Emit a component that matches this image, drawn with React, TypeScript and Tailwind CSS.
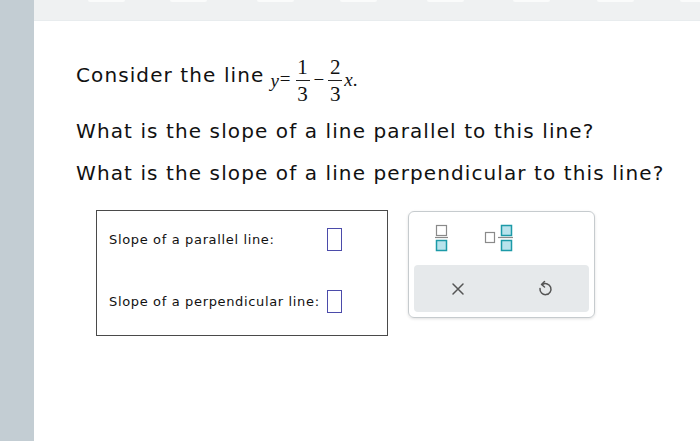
import React from 'react';

function Frac({ n, d }: { n: string; d: string }) {
  return (
    <span className="inline-flex flex-col items-center mt-[10px] leading-none">
      <span className="text-[21px] leading-[20px]">{n}</span>
      <span className="block w-[14px] h-px bg-[#222] mt-[3px]"></span>
      <span className="text-[21px] leading-[20px] pt-[3px]">{d}</span>
    </span>
  );
}

function FracIcon() {
  return (
    <svg width="13" height="28" viewBox="0 0 13 28">
      <rect x="1.5" y="1.5" width="10" height="10" fill="none" stroke="#8a8a8a" strokeWidth="1.2" />
      <line x1="0" y1="13.5" x2="13" y2="13.5" stroke="#8a8a8a" strokeWidth="1.2" />
      <rect x="1.5" y="16.5" width="10" height="10" fill="#b9e3ec" stroke="#1c9aa8" strokeWidth="1.5" />
    </svg>
  );
}

function MixedIcon() {
  return (
    <svg width="30" height="28" viewBox="0 0 30 28">
      <rect x="1.5" y="8.5" width="9" height="10" fill="none" stroke="#8a8a8a" strokeWidth="1.2" />
      <rect x="17.5" y="1.5" width="10" height="10" fill="#b9e3ec" stroke="#1c9aa8" strokeWidth="1.5" />
      <line x1="14" y1="13.5" x2="29" y2="13.5" stroke="#8a8a8a" strokeWidth="1.2" />
      <rect x="17.5" y="16.5" width="10" height="10" fill="#b9e3ec" stroke="#1c9aa8" strokeWidth="1.5" />
    </svg>
  );
}

export default function App() {
  const tabs = [88, 170, 257, 340, 427, 513, 597, 680];
  return (
    <div className="w-[700px] h-[441px] flex bg-white overflow-hidden" style={{ fontFamily: 'Verdana, "DejaVu Sans", sans-serif' }}>
      <div className="w-[34px] h-full bg-[#c3cdd3] shrink-0"></div>
      <div className="flex-1 flex flex-col">
        <div className="h-[21px] bg-[#eff1f2] relative border-b border-[#e8ecee]">
          {tabs.map((x) => (
            <div key={x} className="absolute top-0 w-[37px] h-[2px] bg-[#fafbfb] rounded-b-full" style={{ left: x - 34 }}></div>
          ))}
        </div>
        <div className="pl-[42px] pt-[32px] text-[#111] text-[20px] tracking-[1.1px]">
          <div className="flex items-center h-[44px]">
            <span>Consider the line</span>
            <span className="ml-[6px] flex items-center tracking-normal text-[19px]" style={{ fontFamily: '"Liberation Serif", "Times New Roman", serif' }}>
              <span className="italic mt-[12px]">y</span>
              <span className="mt-[8px] ml-[1px]">=</span>
              <span className="ml-[5px]"><Frac n="1" d="3" /></span>
              <span className="mt-[10px] mx-[4px]">−</span>
              <Frac n="2" d="3" />
              <span className="italic mt-[10px] ml-[2px]">x</span>
              <span className="mt-[10px]">.</span>
            </span>
          </div>
          <div className="mt-[20px] h-[28px] leading-[28px]">What is the slope of a line parallel to this line?</div>
          <div className="mt-[14px] h-[28px] leading-[28px]">What is the slope of a line perpendicular to this line?</div>
          <div className="flex mt-[23px] ml-[20px] items-start tracking-normal">
            <div className="w-[292px] h-[126px] border border-[#4a4a4a] pl-[12px] pt-[17px] text-[13px] tracking-[0.65px] text-[#111]">
              <div className="flex items-center h-[23px]">
                <span className="w-[218px]">Slope of a parallel line:</span>
                <span className="w-[15px] h-[23px] border-[1.5px] border-[#4b4baa]"></span>
              </div>
              <div className="flex items-center h-[23px] mt-[39px]">
                <span className="w-[218px]">Slope of a perpendicular line:</span>
                <span className="w-[15px] h-[23px] border-[1.5px] border-[#4b4baa]"></span>
              </div>
            </div>
            <div className="ml-[20px] mt-[1px] w-[187px] h-[107px] border border-[#c6cbce] rounded-[6px] shadow-[0_1px_3px_rgba(0,0,0,0.12)] p-[5px] flex flex-col">
              <div className="flex items-start h-[48px] pl-[21px] pt-[7px]">
                <FracIcon />
                <span className="ml-[36px]"><MixedIcon /></span>
              </div>
              <div className="flex-1 bg-[#e6e9eb] rounded-[4px] flex items-center">
                <div className="w-1/2 flex justify-center">
                  <svg width="14" height="14" viewBox="0 0 14 14">
                    <path d="M2 2 L12 12 M12 2 L2 12" stroke="#555" strokeWidth="1.5" strokeLinecap="round" />
                  </svg>
                </div>
                <div className="w-1/2 flex justify-center">
                  <svg width="16" height="18" viewBox="0 0 16 18">
                    <path d="M5.5 4.5 A5.5 5.5 0 1 1 3 8.5" fill="none" stroke="#555" strokeWidth="1.5" strokeLinecap="round" />
                    <path d="M7.5 1.5 L4.5 4.5 L7.5 7" fill="none" stroke="#555" strokeWidth="1.5" strokeLinecap="round" strokeLinejoin="round" />
                  </svg>
                </div>
              </div>
            </div>
          </div>
        </div>
      </div>
    </div>
  );
}
